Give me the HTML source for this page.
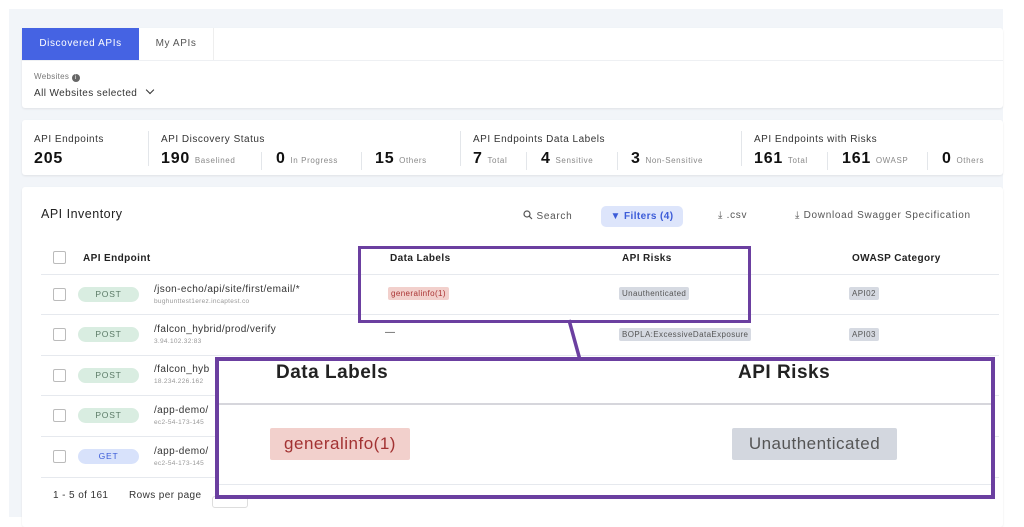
<!DOCTYPE html>
<html><head><meta charset="utf-8"><style>
*{box-sizing:border-box;margin:0;padding:0}
body{width:1024px;height:526px;background:#fff;font-family:"Liberation Sans",sans-serif;position:relative;overflow:hidden;color:#222;letter-spacing:.3px}
.a{position:absolute;white-space:nowrap}
.bg{left:9px;top:9px;width:994px;height:508px;background:#f2f5f9}
.card{background:#fff;border-radius:3px;box-shadow:0 1px 2px rgba(0,0,0,.08)}
.lbl{font-size:10px;color:#333;letter-spacing:.5px}
.big{font-size:16px;font-weight:bold;color:#111;letter-spacing:.8px}
.sm{font-size:8px;color:#888;letter-spacing:.6px}
.sep{width:1px;height:18px;background:#e3e6ea}
.cb{width:13px;height:13px;border:1px solid #bbb;border-radius:2px;background:#fff}
.pill{width:61px;height:15px;border-radius:8px;background:#d9ede1;color:#5a7a66;font-size:8.5px;text-align:center;line-height:15px;letter-spacing:.8px}
.ep{font-size:10px;color:#333;letter-spacing:.4px}
.host{font-size:6.5px;color:#999;letter-spacing:.3px}
.chip{font-size:8px;padding:2px 3px;border-radius:2px;background:#d6dae2;color:#555;letter-spacing:.4px}
.hr{height:1px;background:#e6e9ee}
.th{font-size:10px;font-weight:bold;color:#222;letter-spacing:.4px}
.tb{font-size:10px;color:#555;letter-spacing:.7px}
</style></head><body>
<div class="a bg"></div>
<div class="a card" style="left:22px;top:28px;width:981px;height:80px"></div>
<div class="a" style="left:22px;top:28px;width:117px;height:32px;background:#4563e3;color:#fff;font-size:10px;line-height:32px;text-align:center;letter-spacing:.6px">Discovered APIs</div>
<div class="a" style="left:139px;top:28px;width:75px;height:32px;color:#555;font-size:10px;line-height:32px;text-align:center;border-right:1px solid #eee;letter-spacing:.6px">My APIs</div>
<div class="a" style="left:22px;top:60px;width:981px;height:1px;background:#eef0f3"></div>
<div class="a" style="left:34px;top:72px;font-size:8px;color:#777">Websites <span style="display:inline-block;width:8px;height:8px;border-radius:50%;background:#666;color:#fff;font-size:6px;text-align:center;line-height:8px">i</span></div>
<div class="a" style="left:34px;top:88px;font-size:10px;color:#333;letter-spacing:.4px">All Websites selected &nbsp;&nbsp;<span style="display:inline-block;width:6px;height:6px;border-right:1.3px solid #333;border-bottom:1.3px solid #333;transform:rotate(45deg);position:relative;top:-3px"></span></div>

<div class="a card" style="left:22px;top:120px;width:981px;height:55px"></div>
<div class="a lbl" style="left:34px;top:134px">API Endpoints</div>
<div class="a big" style="left:34px;top:150px">205</div>
<div class="a sep" style="left:148px;top:131px;height:35px"></div>
<div class="a lbl" style="left:161px;top:134px">API Discovery Status</div>
<div class="a" style="left:161px;top:150px"><span class="big">190</span> <span class="sm">Baselined</span></div>
<div class="a sep" style="left:261px;top:152px"></div>
<div class="a" style="left:276px;top:150px"><span class="big">0</span> <span class="sm">In Progress</span></div>
<div class="a sep" style="left:361px;top:152px"></div>
<div class="a" style="left:375px;top:150px"><span class="big">15</span> <span class="sm">Others</span></div>
<div class="a sep" style="left:460px;top:131px;height:35px"></div>
<div class="a lbl" style="left:473px;top:134px">API Endpoints Data Labels</div>
<div class="a" style="left:473px;top:150px"><span class="big">7</span> <span class="sm">Total</span></div>
<div class="a sep" style="left:526px;top:152px"></div>
<div class="a" style="left:541px;top:150px"><span class="big">4</span> <span class="sm">Sensitive</span></div>
<div class="a sep" style="left:617px;top:152px"></div>
<div class="a" style="left:631px;top:150px"><span class="big">3</span> <span class="sm">Non-Sensitive</span></div>
<div class="a sep" style="left:741px;top:131px;height:35px"></div>
<div class="a lbl" style="left:754px;top:134px">API Endpoints with Risks</div>
<div class="a" style="left:754px;top:150px"><span class="big">161</span> <span class="sm">Total</span></div>
<div class="a sep" style="left:827px;top:152px"></div>
<div class="a" style="left:842px;top:150px"><span class="big">161</span> <span class="sm">OWASP</span></div>
<div class="a sep" style="left:927px;top:152px"></div>
<div class="a" style="left:942px;top:150px"><span class="big">0</span> <span class="sm">Others</span></div>

<div class="a card" style="left:22px;top:187px;width:981px;height:340px"></div>
<div class="a" style="left:41px;top:207px;font-size:12.5px;color:#222;letter-spacing:.5px">API Inventory</div>
<div class="a tb" style="left:523px;top:210px"><svg width="10" height="10" style="vertical-align:-1px"><circle cx="4" cy="4" r="3" fill="none" stroke="#555" stroke-width="1.2"/><line x1="6.2" y1="6.2" x2="9" y2="9" stroke="#555" stroke-width="1.2"/></svg> Search</div>
<div class="a" style="left:601px;top:206px;width:82px;height:21px;border-radius:5px;background:#dde5fb;color:#3c5cd8;font-size:10px;line-height:21px;text-align:center;font-weight:bold;letter-spacing:.4px">▼ Filters (4)</div>
<div class="a tb" style="left:718px;top:210px">⤓ .csv</div>
<div class="a tb" style="left:795px;top:210px">⤓ Download Swagger Specification</div>

<div class="a cb" style="left:53px;top:251px"></div>
<div class="a th" style="left:83px;top:253px">API Endpoint</div>
<div class="a th" style="left:390px;top:253px">Data Labels</div>
<div class="a th" style="left:622px;top:253px">API Risks</div>
<div class="a th" style="left:852px;top:253px">OWASP Category</div>
<div class="a hr" style="left:41px;top:274px;width:958px"></div>
<div class="a hr" style="left:41px;top:314px;width:958px"></div>
<div class="a hr" style="left:41px;top:355px;width:958px"></div>
<div class="a hr" style="left:41px;top:395px;width:958px"></div>
<div class="a hr" style="left:41px;top:436px;width:958px"></div>
<div class="a hr" style="left:41px;top:477px;width:958px"></div>

<div class="a cb" style="left:53px;top:288px"></div><div class="a pill" style="left:78px;top:287px">POST</div>
<div class="a ep" style="left:154px;top:284px">/json-echo/api/site/first/email/*</div><div class="a host" style="left:154px;top:298px">bughunttest1erez.incaptest.co</div>
<div class="a chip" style="left:388px;top:287px;background:#f2d0cc;color:#a33">generalinfo(1)</div>
<div class="a chip" style="left:619px;top:287px">Unauthenticated</div>
<div class="a chip" style="left:849px;top:287px">API02</div>

<div class="a cb" style="left:53px;top:328px"></div><div class="a pill" style="left:78px;top:327px">POST</div>
<div class="a ep" style="left:154px;top:324px">/falcon_hybrid/prod/verify</div><div class="a host" style="left:154px;top:338px">3.94.102.32:83</div>
<div class="a" style="left:385px;top:327px;font-size:10px;color:#444">—</div>
<div class="a chip" style="left:619px;top:328px">BOPLA:ExcessiveDataExposure</div>
<div class="a chip" style="left:849px;top:328px">API03</div>

<div class="a cb" style="left:53px;top:369px"></div><div class="a pill" style="left:78px;top:368px">POST</div>
<div class="a ep" style="left:154px;top:364px">/falcon_hyb</div><div class="a host" style="left:154px;top:378px">18.234.226.162</div>
<div class="a cb" style="left:53px;top:409px"></div><div class="a pill" style="left:78px;top:408px">POST</div>
<div class="a ep" style="left:154px;top:405px">/app-demo/</div><div class="a host" style="left:154px;top:419px">ec2-54-173-145</div>
<div class="a cb" style="left:53px;top:450px"></div><div class="a pill" style="left:78px;top:449px;background:#d8e2fb;color:#3c5cd8">GET</div>
<div class="a ep" style="left:154px;top:446px">/app-demo/</div><div class="a host" style="left:154px;top:460px">ec2-54-173-145</div>
<div class="a" style="left:53px;top:490px;font-size:10px;color:#333;letter-spacing:.4px">1 - 5 of 161</div>
<div class="a" style="left:129px;top:490px;font-size:10px;color:#333;letter-spacing:.4px">Rows per page</div>
<div class="a" style="left:212px;top:496px;width:36px;height:12px;border:1px solid #ddd;border-radius:3px"></div>

<div class="a" style="left:358px;top:246px;width:393px;height:77px;border:3px solid #6b3fa0"></div>
<svg class="a" style="left:560px;top:318px" width="30" height="44"><line x1="9" y1="2" x2="20" y2="42" stroke="#6b3fa0" stroke-width="3.5"/></svg>
<div class="a" style="left:215px;top:357px;width:780px;height:142px;border:4px solid #6b3fa0;background:#fff"></div>
<div class="a" style="left:276px;top:362px;font-size:19px;font-weight:bold;color:#222;letter-spacing:.5px">Data Labels</div>
<div class="a" style="left:738px;top:362px;font-size:19px;font-weight:bold;color:#222;letter-spacing:.5px">API Risks</div>
<div class="a" style="left:219px;top:403px;width:772px;height:2px;background:#d6d6dc"></div>
<div class="a" style="left:270px;top:428px;width:140px;height:32px;background:#f2d0cc;border-radius:2px;color:#a23232;font-size:17px;line-height:32px;text-align:center;letter-spacing:.5px">generalinfo(1)</div>
<div class="a" style="left:732px;top:428px;width:165px;height:32px;background:#d3d7df;border-radius:2px;color:#555;font-size:17px;line-height:32px;text-align:center;letter-spacing:.5px">Unauthenticated</div>
<div class="a" style="left:219px;top:484px;width:772px;height:1px;background:#e6e9ee"></div>
</body></html>
